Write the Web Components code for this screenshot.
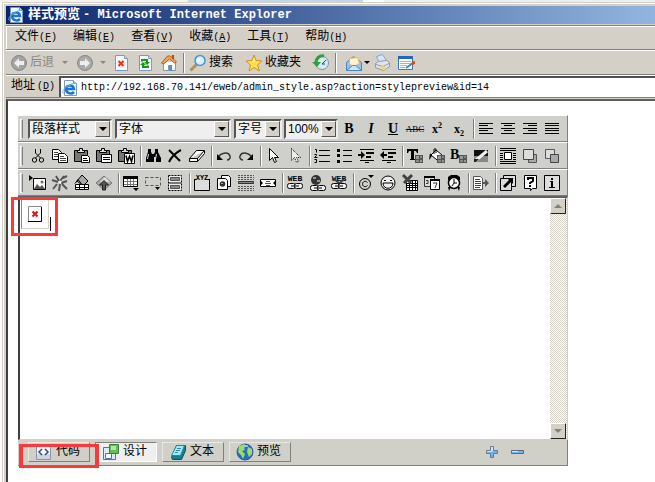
<!DOCTYPE html>
<html lang="zh-CN">
<head>
<meta charset="utf-8">
<title>样式预览</title>
<style>
*{box-sizing:border-box}
html,body{height:100%;margin:0}
body{background:#fff;overflow:hidden;color:#000;font:12px/16px "Liberation Mono","Noto Sans CJK SC",monospace}
</style>
</head>
<body>
<ie-window>
  <ie-title>样式预览</ie-title>
  <ie-menubar></ie-menubar>
  <ie-toolbar></ie-toolbar>
  <ie-address value="http://192.168.70.141/eweb/admin_style.asp?action=stylepreview&amp;id=14"></ie-address>
  <web-editor slot="page"></web-editor>
</ie-window>
<script>
const define=(name,css,html)=>customElements.define(name,class extends HTMLElement{
  constructor(){
    super();
    const t=document.createElement('template');
    t.innerHTML=`<style>*{box-sizing:border-box}button,input,select{font:inherit;color:inherit;margin:0}${css}</style>${typeof html==='function'?html(this):html}`;
    this.attachShadow({mode:'open'}).append(t.content.cloneNode(true));
  }
});

/* ---------- icon drawings, 18x18 grid ---------- */
const K='stroke="#000" fill="none"';
const lines=(a,c='#000')=>`<path stroke="${c}" fill="none" d="${a.map(([x,y,w])=>`M${x} ${y+.5}h${w}`).join('')}"/>`;
const clip=`<path fill="#777" stroke="#000" d="M1.500 3.500h13v11h-13z"/><path fill="#ddd" stroke="#000" d="M4.500 5.500v-2h2v-2h3v2h2v2z"/>`;
const web=`<text x="9" y="7" font-family="Liberation Mono" font-weight="bold" font-size="8" text-anchor="middle">WEB</text>`;
const chain=`<g fill="none" stroke="#000"><rect x="1.500" y="9.500" width="8" height="5" rx="2" fill="#eee"/><rect x="8.500" y="9.500" width="8" height="5" rx="2" fill="#eee"/><path stroke-width="1" d="M5 12h8"/></g>`;
const grid4=`<path fill="#555" d="M9 8h8v8h-8z"/><path fill="#999" d="M10 9h3v3h-3zM14 13h2v2h-2z"/><path fill="#888" d="M14 9h2v2h-2zM10 13h3v2h-3z"/>`;
const page=`<path fill="#f4f8ff" stroke="#8298c0" d="M3.500 1.500h9l3 3v12h-12z"/><path fill="#cfdcf0" stroke="#8298c0" d="M12.500 1.500v3h3"/>`;
const P={
cut:`<path ${K} d="M6.500 2v4l5 5M11.500 2v4l-5 5"/><circle cx="5.500" cy="13" r="2.200" ${K}/><circle cx="12.500" cy="13" r="2.200" ${K}/>`,
copy:`<g fill="#fff" stroke="#000"><path d="M1.500 2.500h6l3 3v7h-9z"/><path d="M7.500 6.500h6l3 3v6h-9z"/></g><path stroke="#444" fill="none" d="M3 5.500h4M3 7.500h4M3 9.500h4M9 9.500h4M9 11.500h6M9 13.500h6"/>`,
paste:clip+`<path fill="#fff" stroke="#000" d="M8.500 8.500h6l2 2v5h-8z"/><path ${K} d="M10 11.500h4M10 13.500h5"/>`,
pastetext:clip+`<path fill="#fff" stroke="#000" d="M6.500 7.500h10v8h-10z"/><path ${K} d="M8 10.500h7M8 12.500h7"/>`,
pasteword:clip+`<path fill="#fff" stroke="#000" d="M7.500 6.500h10v10h-10z"/><path stroke="#000" stroke-width="1.600" fill="none" d="M9 8.500l1.500 6 2-5 2 5 1.500-6"/>`,
find:`<path d="M4 2h3v3l1 2h2l1-2V2h3v3l3 6v4h-5v-5h-2v5H2v-4l2-6z" fill="#000"/><path stroke="#ddd" d="M4.500 7l-1 5M12.500 7l-1 5"/>`,
del:`<path stroke="#000" stroke-width="2" fill="none" d="M3 3l11 11M15 3C9 6 5 11 3 15"/>`,
eraser:`<path fill="#fff" stroke="#000" d="M1.500 11.500l7-8h8l-7 8zM1.500 11.500v3h8l7-8v-3M9.500 11.500v3"/>`,
undo:`<path stroke="#333" stroke-width="1.500" fill="none" d="M3 11c2-5 10-7 12-2 1 3-2 4-3 4"/><path fill="#000" d="M2 7v6h6z"/>`,
redo:`<path stroke="#333" stroke-width="1.500" fill="none" d="M15 11c-2-5-10-7-12-2-1 3 2 4 3 4"/><path fill="#000" d="M16 7v6h-6z"/>`,
arrow:`<path fill="#fff" stroke="#000" d="M5.500 1.500v12l3-3 2 5 2-1-2-4h4z"/>`,
arrowdash:`<path fill="#eee" stroke="#000" stroke-dasharray="1 1" d="M5.500 1.500v12l3-3 2 5 2-1-2-4h4z"/>`,
ol:`<path ${K} d="M2 2.500h1.500v3M1.500 7.500h2v1l-2 2h3M1.500 12.500h2v3h-2"/>`+lines([[6,3,11],[6,8,11],[6,14,11]]),
ul:`<path d="M2 2h3v3H2zM2 7h3v3H2zM2 13h3v3H2z"/>`+lines([[8,3,9],[8,8,9],[8,14,9]]),
outdent:`<path d="M1 7h3V4l4 4-4 4V9H1z"/>`+lines([[3,2,14],[9,5,8],[9,6,8],[9,9,5],[9,10,5],[3,13,14],[8,15,4]]),
indent:`<path d="M8 7H5V4L1 8l4 4V9h3z"/>`+lines([[3,2,14],[9,5,8],[9,6,8],[9,9,5],[9,10,5],[3,13,14],[8,15,4]]),
fore:`<path d="M1 2h11v4h-1L10 4H8v8h2v1H4v-1h1V4H3L2 6H1z"/>`+grid4,
back:`<path fill="#fff" stroke="#000" d="M3 8l5-5 6 5-5 5zM6 7V2h2v4"/><path d="M2 6l-1 7 3-4z"/>`+grid4,
boldcolor:`<text x="0" y="12" font-family="Liberation Serif" font-weight="bold" font-size="14">B</text>`+grid4,
contrast:`<path fill="#111" d="M2 3h14v12H2z"/><path fill="#888" d="M2 9h14v6H2z"/><path stroke="#eee" stroke-width="3" d="M3 14L15 4"/><path fill="#222" d="M2 12h5l-3 3H2z"/>`,
absolute:lines([[1,1,16],[1,3,16],[1,14,16],[1,16,16],[1,6,3],[1,8,3],[1,10,3],[1,12,3],[14,6,3],[14,8,3],[14,10,3],[14,12,3]])+`<path fill="#fff" stroke="#000" d="M5.500 5.500h7v7h-7z"/>`,
front:`<path fill="#aaa" stroke="#555" d="M7.500 7.500h8v8h-8z"/><path fill="#ddd" stroke="#444" d="M2.500 2.500h10v10h-10z"/>`,
behind:`<path fill="#ddd" stroke="#555" d="M2.500 2.500h9v9h-9z"/><path fill="#aaa" stroke="#444" d="M7.500 7.500h8v8h-8z"/>`,
left:lines([[2,3,14],[2,5,9],[2,8,14],[2,10,9],[2,13,14]]),
center:lines([[2,3,14],[5,5,8],[2,8,14],[5,10,8],[2,13,14]]),
right:lines([[2,3,14],[7,5,9],[2,8,14],[7,10,9],[2,13,14]]),
full:lines([[2,3,14],[2,5,14],[2,8,14],[2,10,14],[2,13,14]]),
image:`<path d="M0 1l4 3-4 3z"/><path fill="#fff" stroke="#000" d="M4.500 4.500h12v11h-12z"/><path fill="#555" d="M5 15l3-5 3 3 2-2 3 4z"/><circle cx="13" cy="8" r="1.500" fill="#666"/>`,
flash:`<path stroke="#555" stroke-width="2" fill="none" d="M7 8L1 6M8 7L5 2M9 7l4-5M10 9l6-2M6 10l-4 5M9 10l-1 7M11 10l5 5M12 4l4-2"/><circle cx="9" cy="8" r="1.500" fill="#eee"/>`,
media:`<path fill="#aaa" stroke="#000" d="M4 7l5-6 6 6-5 5z"/><path fill="#fff" stroke="#000" d="M2.500 10.500h13v5h-13z"/><path ${K} d="M2 9.500l3-4 4 5M6.500 11v4M11.500 11v4M2 13.500h14"/>`,
file:`<path fill="#aaa" stroke="#777" d="M1 9l8-7 8 7-8 7z"/><path fill="#ddd" d="M5 8l5-5 5 5z"/><path fill="#555" stroke="#222" d="M7.500 16v-5h-3L9 6.500l4.500 4.500h-3v5z"/>`,
table:`<path fill="#fff" stroke="#000" d="M1.500 3.500h14v9h-14z"/><path d="M1 2h15v3H1zM11 14h6l-3 3z"/><path stroke="#777" d="M2 7.500h13M2 10.500h13M5.500 5v7M8.500 5v7M11.500 5v7"/>`,
cell:`<path fill="none" stroke="#555" stroke-dasharray="3 2" d="M1.500 3.500h15v8h-15z"/><path d="M11 13h5l-2.500 3z"/>`,
rows:`<path fill="#eee" stroke="#000" stroke-dasharray="2 1" d="M2.500 1.500h13v15h-13z"/><path fill="#888" stroke="#555" d="M4.500 3.500h9v3h-9zM4.500 11.500h9v3h-9z"/><path stroke="#000" d="M3 9h12"/>`,
xyz:`<path fill="#ddd" stroke="#000" d="M1.500 5v11.500h15V5M1.500 5.500h2M14 5.500h2"/><text x="9" y="6" font-family="Liberation Mono" font-weight="bold" font-size="7" text-anchor="middle">XYZ</text>`,
pages:`<path fill="#fff" stroke="#000" d="M6.500 1.500h7l2 2v9h-9z"/><path fill="#fff" stroke="#000" d="M2.500 4.500h8l2 2v9h-10z"/><circle cx="7.500" cy="10" r="2.800" fill="#333"/><path fill="#aaa" d="M6 9h2v1H6z"/>`,
hr:`<g stroke="#555" stroke-dasharray="2 1"><path d="M1 1.500h16M1 3.500h16M1 5.500h16M1 12.500h16M1 14.500h16M1 16.500h16"/></g><path fill="#888" stroke="#333" d="M1.500 7.500h15v2h-15z"/>`,
marquee:`<path fill="#fff" stroke="#000" d="M1.500 5.500h15v7h-15z"/><path d="M2 7l2 2-2 2zM16 7l-2 2 2 2z"/><path stroke="#555" d="M7 7.500h4M6 9.500h6M7 11.500h4"/>`,
link:web+chain,
linkmap:`<circle cx="8" cy="6" r="5" fill="#333"/><path fill="#999" d="M5 3h3v2H5zM9 6h3v2H9z"/><g transform="translate(1 2)">${chain}</g>`,
unlink:web+`<path stroke="#444" stroke-width="2" d="M4 5l10 8M14 5L5 14"/>`+chain,
symbol:`<circle cx="8" cy="10" r="5.500" ${K}/><path ${K} d="M10.500 8.500C8 6 5.500 8 5.500 10s2.500 4 5 1.500"/><path d="M11 1h6l-3 3z"/>`,
smile:`<circle cx="9" cy="9" r="7" fill="#eee" stroke="#000"/><path ${K} d="M4 9h10c0 7-10 7-10 0M5 6.500h2M11 6.500h2"/>`,
excel:`<path fill="#fff" stroke="#000" d="M5.500 6.500h11v10h-11z"/><path stroke="#000" d="M5 9.500h12M5 11.500h12M5 13.500h12M8.500 7v9M11.500 7v9M14.500 7v9"/><path stroke="#444" stroke-width="3" d="M2 1l8 8M11 1L3 9"/>`,
date:`<path fill="#ddd" stroke="#333" d="M1.500 2.500h10v10h-10z"/><path fill="#fff" stroke="#000" d="M7.500 5.500h9v10h-9z"/><path d="M1 2h11v2H1zM7 5h10v2H7z"/><path stroke="#333" fill="none" d="M3 6.500h2v3H3M10 9h4l-2 5"/>`,
clock:`<path d="M3 3l3-2h6l3 2v3H3zM3 13h3l-2 4zM15 13h-3l2 4z"/><circle cx="9" cy="9" r="5.500" fill="#fff" stroke="#000" stroke-width="1.500"/><path ${K} d="M9 5v4h3M9 9l-2 3"/>`,
template:`<path fill="#fff" stroke="#555" d="M1.500 2.500h7l2 2v11h-9z"/><path stroke="#444" d="M3 5.500h5M3 7.500h6M3 9.500h6M3 11.500h6M3 13.500h5"/><path fill="#555" d="M10 8h3V5l4 4-4 4v-3h-3z"/>`,
maximize:`<path fill="#ddd" stroke="#000" d="M4.500 1.500h12v11h-12z"/><path fill="#ddd" stroke="#000" d="M1.500 4.500h11v12h-11z"/><path d="M8 4h6v6l-2-2-6 6-2-2 6-6z"/>`,
help:`<path fill="#fff" stroke="#000" d="M3.500 1.500h12v13h-4l-2 2v-2h-6z"/><path stroke="#000" stroke-width="2" fill="none" d="M7 6V4h5v3l-3 2v1M9 11v2"/>`,
about:`<path fill="#ddd" stroke="#000" d="M1.500 1.500h15v15h-15z"/><path d="M8 4h2v2H8zM7 7h3v6h2v1H6v-1h2V8H7z"/>`,
/* coloured icons */
ie:page+`<path fill="none" stroke="#1c76cc" stroke-width="2.500" d="M13 13c-3 3-8 1-8-3s7-5 8 0H5"/><path fill="none" stroke="#58b4ee" d="M3 14C0 15 2 9 9 6c5-3 8-2 6 1"/>`,
prev:`<circle cx="9" cy="9" r="7.500" fill="#a3a3a3" stroke="#888"/><path fill="#eee" d="M4 9l5-5v3h5v4H9v3z"/>`,
next:`<circle cx="9" cy="9" r="7.500" fill="#a9a9a9" stroke="#888"/><path fill="#eee" d="M14 9L9 4v3H4v4h5v3z"/>`,
stop:page+`<path stroke="#ee3010" stroke-width="2" d="M6.500 7l5 5M11.500 7l-5 5"/>`,
refresh:page+`<path stroke="#189818" stroke-width="2" fill="none" d="M6 7.500V6h5v2.500M12 11.500V13H7v-2.500"/><path fill="#189818" d="M8 8h6l-3 3zM4 11h6L7 8z"/>`,
home:`<path fill="#fff" stroke="#8b95ab" d="M3.500 8.500v8h5v-5h3v5h4v-9"/><path fill="#f0a850" stroke="#b26020" d="M1.500 9l6-7h3l6 6-2 1-5-4-6 5z"/><path fill="#4c94d8" d="M9 11h3v6H9z"/><path fill="#c04428" d="M12 1h2v4h-2z"/>`,
search:`<path stroke="#b39158" stroke-width="3" d="M1.500 16.500l6-6"/><circle cx="11" cy="6.500" r="5" fill="#d5efff" stroke="#4b91d2" stroke-width="1.500"/><path fill="#fff" d="M8 4h3v3H8z"/>`,
star:`<path fill="#ffdf4c" stroke="#cf9418" d="M9 1l2 5.500 6 .5-4.500 4 2 6L9 13.500 4 17l1.500-6L1 7l6-.5z"/><path fill="#fff4a0" d="M9 4l1 4H7z"/>`,
history:`<circle cx="10" cy="9" r="6.500" fill="#d9eaf5" stroke="#7496ac"/><path fill="none" stroke="#2aa040" stroke-width="3" d="M12 2C8 1 4 4 4 9"/><path fill="#2aa040" d="M0 8h9l-4 5z"/><path stroke="#247" fill="none" d="M14 6l-4 4h3"/>`,
mail:`<path fill="#8fc3f2" stroke="#5384b8" d="M1.500 8.500l7-6 8 6v8h-15z"/><path fill="#fff3cc" stroke="#e6b670" d="M4.500 10V4.500l8-1 2 6-6 3z"/><path fill="#c9e4ff" stroke="#5384b8" d="M1.500 16.500l6-5h3l6 5z"/>`,
print:`<path fill="#d5e6fb" stroke="#86a4cc" d="M3.500 2.500l6-2 4 6-7 3z"/><path fill="#e2e4ea" stroke="#8f98a8" d="M2.500 9.500l3-2 8-1 3 2v4l-6 4-8-3z"/><path stroke="#999" fill="none" d="M3 10.500l7 2 6-3"/><path fill="#f4d970" d="M6 14l5 2 3-2-5-2z"/>`,
edit:`<path fill="#fff" stroke="#3c76c4" d="M1.500 2.500h14v13h-14z"/><path fill="#2266c2" d="M1 2h15v3H1z"/><path stroke="#9db5d2" d="M3 7.500h11M3 9.500h11M3 11.500h7M3 13.500h5"/><path stroke="#3388d8" stroke-width="2" d="M9 14l7-5"/><path stroke="#e04810" stroke-width="3" d="M15 10l3-2"/>`,
code:`<path fill="#f3f6fb" stroke="#8895a8" d="M1.500 1.500h11l3 3v12h-14z"/><path fill="#ccd5e2" d="M2 11h13v5H2z"/><path stroke="#38506e" stroke-width="1.500" fill="none" d="M7 6L4 9l3 3M10 6l3 3-3 3"/>`,
design:`<path fill="#dcecfb" stroke="#4978a4" d="M1.500 4.500h12v12h-12z"/><path fill="#fff" stroke="#4978a4" d="M3.500 10.500h6v5h-6z"/><path fill="#65bd55" stroke="#3a8035" d="M7.500 1.500h9v9h-9z"/><path fill="#b2e8a4" d="M9 3h5v4H9z"/>`,
text:`<path fill="#177c91" stroke="#10505c" d="M2.500 14.500l5-12h9v5l-4 9h-9z"/><path fill="#a6e9f2" stroke="#178ba0" d="M2.500 12.500l5-10h8l-4 10z"/><path stroke="#278ca4" d="M8 5.500h4M7 7.500h4M6 9.500h3"/>`,
globe:`<circle cx="9" cy="9" r="8" fill="#296ec0" stroke="#3758a0"/><path fill="#9bdc68" d="M3 3l5-2 2 2-2 2 1 2-3 1 3 3-2 5-2-4-3-3zM12 4l4 2v5l-3 3-2-5z"/><path fill="#c2e6ff" opacity=".6" d="M8 2h4v2H9z"/>`,
plus:`<path fill="#6fb0ee" stroke="#6b7c90" d="M7.500 3.500h3v4h4v3h-4v4h-3v-4h-4v-3h4z"/><path fill="#cbe5fc" d="M8 4h2v4H9v1H4V8h4z"/>`,
minus:`<path fill="#78b4ee" stroke="#5b6c80" d="M3.500 7.500h12v3h-12z"/><path fill="#cbe5fc" d="M4 8h6v1H4z"/>`,
broken:`<path fill="#fff" stroke="#888" d="M2.500 1.500h13v15h-13z"/><path stroke="#000" fill="none" d="M15.500 2v14.500H2"/><path stroke="#e01010" stroke-width="2" d="M6.500 6.500l5 5M11.500 6.500l-5 5"/>`
};
define('ui-icon',':host{display:block;flex:none;width:18px;height:18px}svg{display:block;width:100%;height:100%}',
  el=>`<svg viewBox="0 0 18 18" aria-hidden="true">${P[el.getAttribute('name')]}</svg>`);

/* ---------- browser frame ---------- */
define('ie-window',`
:host{display:flex;flex-direction:column;height:100%}
.behind{flex:none;height:2px;background:linear-gradient(to right,#f4f3ee 188px,#c3d5ea 188px 363px,#fff 363px 384px,#eee 384px)}
.edge{flex:1;min-height:0;display:flex;margin-left:2px;border:solid #d4d0c8;border-width:1px 0 0 1px}
.frame{flex:1;min-width:0;display:flex;flex-direction:column;border:solid #fff;border-width:1px 0 0 1px;padding:2px 0 0 2px;background:#d4d0c8}
main{flex:1;min-height:0;display:flex;border:solid #404040;border-width:2px 0 0 2px;border-top-color:#606060;background:#fff;padding:14px 10px 16px 10px}`,
`<div class="behind"></div><div class="edge"><div class="frame"><slot></slot><main><slot name="page"></slot></main></div></div>`);

define('ie-title',`
:host{display:flex;align-items:center;gap:3px;height:18px;margin-bottom:1px;padding-left:1px;flex:none;background:linear-gradient(to right,#0a246a,#92b5e0);color:#fff;font-weight:bold;white-space:nowrap}
.name{font-size:13px}`,
`<ui-icon name="ie"></ui-icon><span class="name"><slot></slot></span><span>- Microsoft Internet Explorer</span>`);

define('ie-menubar',`
:host{display:flex;align-items:center;height:25px;flex:none;border:solid #808080;border-width:1px 0;box-shadow:inset 1px 1px #fff;padding-left:1px}
button{border:0;background:none;padding:0 8px;white-space:nowrap;line-height:20px}
span{font-size:10px}`,
[['文件','F'],['编辑','E'],['查看','V'],['收藏','A'],['工具','T'],['帮助','H']].map(([a,b])=>`<button>${a}<span>(<u>${b}</u>)</span></button>`).join(''));

define('ie-toolbar',`
:host{display:flex;align-items:center;height:25px;flex:none;border-top:1px solid #fff;border-bottom:1px solid #808080;padding-left:4px}
button{display:flex;align-items:center;gap:2px;border:0;background:none;padding:0;white-space:nowrap}
button:disabled{color:#888}
.drop{width:18px;justify-content:center}
.drop::before{content:"";border:3px solid transparent;border-top-color:currentColor;border-bottom:0}
.wide{width:22px}
.narrow{width:8px;margin-right:2px}
.g{margin-right:6px}
.fav{margin:0 11px 0 12px}
.mail{margin-left:4px}
i{width:2px;height:20px;border-left:1px solid #808080;border-right:1px solid #fff;margin:0 4px 0 5px}`,
`<button disabled><ui-icon name="prev"></ui-icon>后退</button><button disabled class="drop wide" aria-label="后退列表"></button>
<button disabled aria-label="前进"><ui-icon name="next"></ui-icon></button><button disabled class="drop" aria-label="前进列表"></button>
<button class="g" aria-label="停止"><ui-icon name="stop"></ui-icon></button>
<button class="g" aria-label="刷新"><ui-icon name="refresh"></ui-icon></button>
<button aria-label="主页"><ui-icon name="home"></ui-icon></button><i></i>
<button><ui-icon name="search"></ui-icon>搜索</button>
<button class="fav"><ui-icon name="star"></ui-icon>收藏夹</button>
<button aria-label="历史"><ui-icon name="history"></ui-icon></button><i></i>
<button class="mail" aria-label="邮件"><ui-icon name="mail"></ui-icon></button><button class="drop narrow" aria-label="邮件列表"></button>
<button class="g" aria-label="打印"><ui-icon name="print"></ui-icon></button>
<button aria-label="编辑"><ui-icon name="edit"></ui-icon></button>`);

define('ie-address',`
:host{display:flex;align-items:center;height:23px;flex:none;border-top:1px solid #fff;border-bottom:1px solid #808080;margin-bottom:1px;padding-left:5px}
label{flex:none;width:48px;white-space:nowrap}
label span,input{font-size:10px}
label span{margin-left:2px}
.box{flex:1;min-width:0;height:21px;display:flex;align-items:center;gap:2px;background:#fff;border:solid #505050;border-width:2px 0 0 2px}
input{flex:1;min-width:0;border:0;padding:0;background:none;outline:0;height:18px}`,
el=>`<label for="url">地址<span>(<u>D</u>)</span></label><div class="box"><ui-icon name="ie"></ui-icon><input id="url" value="${el.getAttribute('value').replace(/&/g,'&amp;')}"></div>`);

/* ---------- rich text editor ---------- */
define('tool-button',`
:host{display:block;flex:none;width:22px}
button{width:22px;height:22px;padding:0;border:0;background:none;display:flex;align-items:center;justify-content:center;font:bold 14px/18px "Liberation Serif",serif}
.abc{font-size:9px;font-weight:normal}
.x{font-size:12px}sup,sub{font-size:8px;line-height:0}`,
el=>`<button aria-label="${el.getAttribute('name')}">${({
bold:'B',italic:'<em>I</em>',underline:'<u>U</u>',strike:'<s class="abc">ABC</s>',sup:'<span class="x">x<sup>2</sup></span>',sub:'<span class="x">x<sub>2</sub></span>'
})[el.getAttribute('name')]||`<ui-icon name="${el.getAttribute('name')}"></ui-icon>`}</button>`);

define('tool-select',`
:host{display:grid;flex:none;height:20px;border:2px solid;border-color:#555 #eee #eee #555;background:#efefef;font-family:"Liberation Sans","Noto Sans CJK SC",sans-serif}
select,b{grid-area:1/1}
select{appearance:none;border:0;background:none;padding:0 0 0 2px;width:100%;height:16px;line-height:16px;outline:0}
b{justify-self:end;width:15px;height:16px;background:#d4d0c8;border:1px solid;border-color:#fff #555 #555 #fff;pointer-events:none;display:grid;place-items:center}
b::before{content:"";border:4px solid transparent;border-top-color:#000;border-bottom:0}`,
el=>`<select aria-label="${el.title}"><option>${el.title}</option></select><b></b>`);

define('tool-row',`
:host{display:flex;align-items:center;height:27px;flex:none;border-top:1px solid #fff;border-bottom:1px solid #808080;border-right:1px solid #808080;background:#cfcfcc}
i{flex:none;width:3px;height:20px;border:1px solid;border-color:#fff #808080 #fff #fff;margin:0 4px 0 2px}`,
`<i></i><slot></slot>`);

const tools=groups=>groups.map(g=>g.split(' ').map(n=>`<tool-button name="${n}"></tool-button>`).join('')).join('<i class="sep"></i>');

define('edit-area',`
:host{display:flex;flex:1;min-height:0;border:solid #404040;border-width:2px 0 0 2px;border-top-color:#606060;border-right:1px solid #d4d0c8;border-bottom:1px solid #d4d0c8;background:#fff;position:relative}
.doc{flex:1;padding:1px;display:flex;align-items:flex-start;gap:1px}
.pic{width:28px;height:30px;border:1px solid;border-color:#888 #d4d0c8 #d4d0c8 #888;display:grid;place-items:center}
.caret{width:1px;height:14px;margin-top:18px;background:#000}
.bar{width:17px;display:flex;flex-direction:column;justify-content:space-between;background:repeating-conic-gradient(#fff 0 25%,#d4d0c8 0 50%) 0 0/2px 2px}
button{width:16px;height:16px;padding:0;background:#d4d0c8;border:1px solid;border-color:#fff #222 #222 #fff;display:grid;place-items:center}
button::before{content:"";border:4px solid transparent;border-top:0;border-bottom-color:#808080}
.down::before{border-top:4px solid #808080;border-bottom:0}
.mark{position:absolute;left:-9px;top:-1px;width:47px;height:39px;border:3px solid #fa3a3a}`,
`<div class="doc"><div class="pic"><ui-icon name="broken"></ui-icon></div><div class="caret"></div></div>
<div class="bar"><button aria-label="向上"></button><button class="down" aria-label="向下"></button></div><div class="mark"></div>`);

define('mode-bar',`
:host{display:flex;align-items:center;gap:5px;height:26px;flex:none;padding-left:10px;padding-bottom:1px;background:#d0d0c8;border:solid #808080;border-width:0 1px 1px 0;position:relative}
button{display:flex;align-items:center;gap:3px;padding:0;border:0;background:none;white-space:nowrap}
.mode{width:62px;height:20px;padding-left:6px;border:1px solid;border-color:#e8e8e4 #808080 #808080 #e8e8e4}
.on{background:#efefef;border-color:#808080 #fff #fff #808080}
.size{display:flex;gap:7px;margin:0 41px 0 auto}
.mark{position:absolute;left:1px;top:4px;width:80px;height:24px;border:4px solid #fa3a3a;border-top-width:3px;border-bottom-width:3px}`,
`<button class="mode"><ui-icon name="code"></ui-icon>代码</button><button class="mode on"><ui-icon name="design"></ui-icon>设计</button>
<button class="mode"><ui-icon name="text"></ui-icon>文本</button><button class="mode"><ui-icon name="globe"></ui-icon>预览</button>
<div class="size"><button aria-label="增高"><ui-icon name="plus"></ui-icon></button><button aria-label="减小"><ui-icon name="minus"></ui-icon></button></div><div class="mark"></div>`);

define('web-editor',`
:host{display:flex;flex-direction:column;flex:1;min-width:0;max-width:550px}
.sep{flex:none;width:2px;height:20px;margin-left:3px;border-left:1px solid #808080;border-right:1px solid #fff}
tool-select{margin:0 2px 0 1px}
.para{width:84px}.font{width:116px}.size{width:48px}.zoom{width:54px;margin-right:0;margin-left:0}`,
`<tool-row><tool-select class="para" title="段落样式"></tool-select><tool-select class="font" title="字体"></tool-select><tool-select class="size" title="字号"></tool-select><tool-select class="zoom" title="100%"></tool-select>${tools(['bold italic underline strike sup sub','left center right full'])}</tool-row>
<tool-row>${tools(['cut copy paste pastetext pasteword','find del eraser','undo redo','arrow arrowdash','ol ul outdent indent','fore back boldcolor contrast','absolute front behind'])}</tool-row>
<tool-row>${tools(['image flash media file','table cell rows','xyz pages hr marquee','link linkmap unlink','symbol smile excel date clock','template','maximize help about'])}</tool-row>
<edit-area></edit-area><mode-bar></mode-bar>`);
</script>
</body>
</html>
